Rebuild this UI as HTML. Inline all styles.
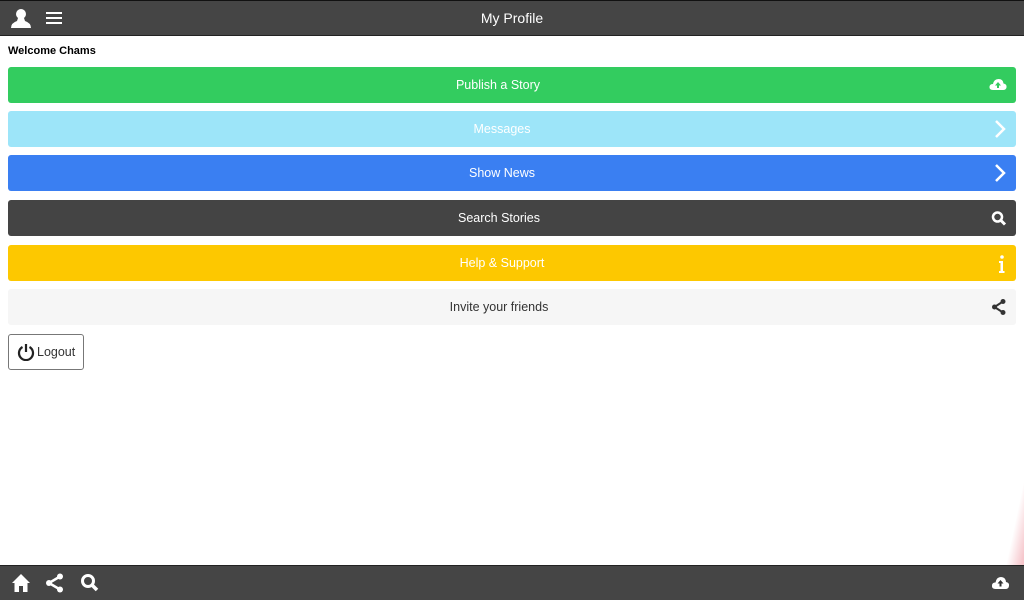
<!DOCTYPE html>
<html><head><meta charset="utf-8"><style>
*{box-sizing:border-box;margin:0;padding:0}
body{width:1024px;height:600px;overflow:hidden;background:#fff;font-family:"Liberation Sans",sans-serif;position:relative}
.hdr{position:absolute;left:0;top:0;width:1024px;height:36px;background:#454545;border-top:1px solid #111;border-bottom:1px solid #222;color:#fff;text-align:center;font-size:14px;line-height:35px}
.ftr{position:absolute;left:0;top:565px;width:1024px;height:35px;background:#454545;border-top:1px solid #222}
.wel{position:absolute;left:8px;top:45px;font-size:11px;font-weight:bold;color:#000}
.btn{position:absolute;left:8px;width:1008px;height:36px;border-radius:3px;font-size:12.5px;text-align:center;line-height:36px;color:#fff;padding-right:16px}
.btn svg{position:absolute;right:9px;top:9px}
.lo{position:absolute;left:8px;top:334px;width:76px;height:36px;border:1px solid #777;border-radius:3px;font-size:12.5px;color:#333;line-height:34px;padding-left:28px}
.streak{position:absolute;left:1005px;top:420px;width:40px;height:150px;background:linear-gradient(90deg,rgba(255,255,255,0),rgba(238,150,160,.55) 40%,rgba(238,150,160,.7));transform:skewX(-12deg);transform-origin:bottom}
</style></head><body>
<div class="streak"></div>
<div class="hdr">My Profile
<svg style="position:absolute;left:10px;top:7px" width="22" height="21" viewBox="0 0 22 21"><circle cx="11" cy="6" r="5" fill="#fff"/><path d="M8 10 L14 10 L15 13 Q21 15 21 20 L1 20 Q1 15 7 13Z" fill="#fff"/></svg>
<svg style="position:absolute;left:46px;top:11px" width="16" height="12"><rect y="0" width="16" height="2" fill="#fff"/><rect y="5" width="16" height="2" fill="#fff"/><rect y="10" width="16" height="2" fill="#fff"/></svg>
</div>
<div class="wel">Welcome Chams</div>
<div class="btn" style="top:67px;background:#33cc5f;padding-right:28px">Publish a Story<svg width="18" height="18" viewBox="0 0 18 18"><path d="M4 14 Q0 14 0.5 10.5 Q1 8 4 8 Q5 3 9.5 3 Q14 3 14.5 7.5 Q18 8 17.5 11.5 Q17 14 14 14Z" fill="#fff"/><path d="M9 6 L12 9.5 L10 9.5 L10 12 L8 12 L8 9.5 L6 9.5Z" fill="#33cc5f"/></svg></div>
<div class="btn" style="top:111px;background:#9de5f9;padding-right:20px">Messages<svg width="14" height="18" viewBox="0 0 14 18"><path d="M3 1 L11 9 L3 17" stroke="#fff" stroke-width="2.5" fill="none"/></svg></div>
<div class="btn" style="top:155px;background:#3a7ff2;padding-right:20px">Show News<svg width="14" height="18" viewBox="0 0 14 18"><path d="M3 1 L11 9 L3 17" stroke="#fff" stroke-width="2.5" fill="none"/></svg></div>
<div class="btn" style="top:200px;background:#444;padding-right:26px">Search Stories<svg width="16" height="18" viewBox="0 0 16 18"><circle cx="6.5" cy="8" r="4.5" stroke="#fff" stroke-width="2.5" fill="none"/><path d="M10 11.5 L14 15.5" stroke="#fff" stroke-width="3"/></svg></div>
<div class="btn" style="top:245px;background:#fdc800;padding-right:20px">Help &amp; Support<svg width="14" height="20" viewBox="0 0 14 20"><circle cx="9" cy="3" r="1.8" fill="#fff"/><path d="M6 7 L10 7 L10 17 L11.5 17 L11.5 19 L6 19 L6 17 L7.5 17 L7.5 9 L6 9Z" fill="#fff"/></svg></div>
<div class="btn" style="top:289px;background:#f6f6f6;color:#333;padding-right:26px">Invite your friends<svg width="16" height="18" viewBox="0 0 16 18"><circle cx="12" cy="3.5" r="2.5" fill="#333"/><circle cx="3.5" cy="9" r="2.5" fill="#333"/><circle cx="12" cy="14.5" r="2.5" fill="#333"/><path d="M12 3.5 L3.5 9 L12 14.5" stroke="#333" stroke-width="2" fill="none"/></svg></div>
<div class="lo"><svg style="position:absolute;left:8px;top:8px" width="18" height="18" viewBox="0 0 18 18"><path d="M5.5 4 A7 7 0 1 0 12.5 4" stroke="#222" stroke-width="2.2" fill="none"/><path d="M9 1 L9 9" stroke="#222" stroke-width="2.2"/></svg>Logout</div>
<div class="ftr">
<svg style="position:absolute;left:11px;top:7px" width="20" height="20" viewBox="0 0 20 20"><path d="M10 1 L19 10 L16.5 10 L16.5 19 L12 19 L12 13 L8 13 L8 19 L3.5 19 L3.5 10 L1 10Z" fill="#fff"/></svg>
<svg style="position:absolute;left:45px;top:7px" width="20" height="20" viewBox="0 0 20 20"><circle cx="15" cy="3.5" r="3" fill="#fff"/><circle cx="4" cy="10" r="3" fill="#fff"/><circle cx="15" cy="16.5" r="3" fill="#fff"/><path d="M15 3.5 L4 10 L15 16.5" stroke="#fff" stroke-width="2.5" fill="none"/></svg>
<svg style="position:absolute;left:80px;top:7px" width="20" height="20" viewBox="0 0 20 20"><circle cx="8" cy="8" r="5.5" stroke="#fff" stroke-width="3" fill="none"/><path d="M12 12 L17 17" stroke="#fff" stroke-width="3.5"/></svg>
<svg style="position:absolute;left:989px;top:8px" width="23" height="18" viewBox="0 0 18 18"><path d="M4 15 Q0 15 0.5 11 Q1 8.5 4 8.5 Q5 3 9.5 3 Q14 3 14.5 8 Q18 8.5 17.5 12 Q17 15 14 15Z" fill="#fff"/><path d="M9 6 L12 9.5 L10 9.5 L10 12.5 L8 12.5 L8 9.5 L6 9.5Z" fill="#333"/></svg>
</div>
</body></html>
